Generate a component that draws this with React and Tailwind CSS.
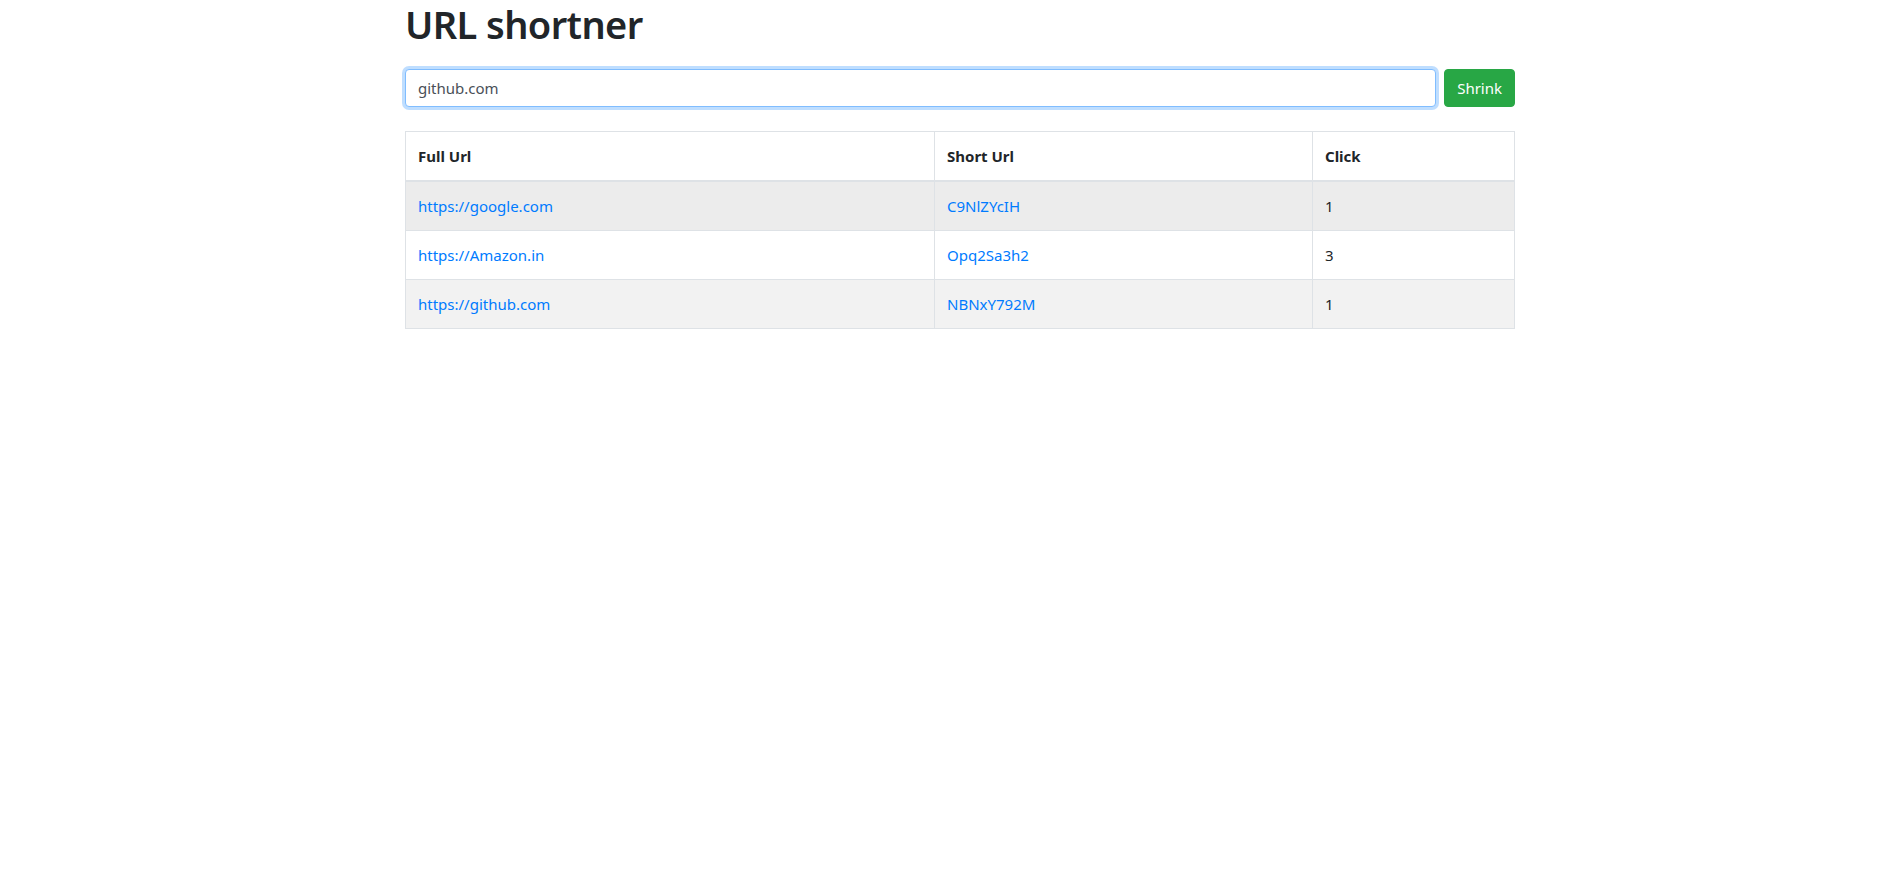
import { useState } from "react";

const links = [
  { full: "https://google.com", short: "C9NlZYcIH", clicks: 1, hover: true },
  { full: "https://Amazon.in", short: "Opq2Sa3h2", clicks: 3 },
  { full: "https://github.com", short: "NBNxY792M", clicks: 1 },
];

export default function App() {
  const [url, setUrl] = useState("github.com");

  return (
    <div className="min-h-screen bg-white text-[#212529] font-['Noto_Sans',sans-serif] text-[15px]">
      <div className="ml-[390px] w-[1140px] px-[15px]">
        <h1 className="text-[38px] leading-[48px] font-semibold mb-[21px] tracking-[-0.6px]">URL shortner</h1>

        <form className="flex gap-2 mb-6" onSubmit={(e) => e.preventDefault()}>
          <input
            value={url}
            onChange={(e) => setUrl(e.target.value)}
            className="flex-1 h-[38px] px-3 text-[15px] text-[#495057] bg-white border border-[#80bdff] rounded-[4px] outline-none shadow-[0_0_0_3px_rgba(0,123,255,0.25)]"
          />
          <button
            type="submit"
            className="h-[38px] px-3 bg-[#28a745] text-white text-[15px] rounded-[4px] border border-[#28a745]"
          >
            Shrink
          </button>
        </form>

        <table className="w-full border-collapse">
          <thead>
            <tr>
              <th className="w-[529px] border border-[#dee2e6] border-b-2 p-3 text-left font-bold leading-6">Full Url</th>
              <th className="w-[378px] border border-[#dee2e6] border-b-2 p-3 text-left font-bold leading-6">Short Url</th>
              <th className="border border-[#dee2e6] border-b-2 p-3 text-left font-bold leading-6">Click</th>
            </tr>
          </thead>
          <tbody>
            {links.map((link, i) => (
              <tr
                key={link.short}
                className={link.hover ? "bg-[#ececec]" : i % 2 === 0 ? "bg-[#f2f2f2]" : "bg-white"}
              >
                <td className="border border-[#dee2e6] p-3 leading-6">
                  <a href="#" className="text-[#007bff]">{link.full}</a>
                </td>
                <td className="border border-[#dee2e6] p-3 leading-6">
                  <a href="#" className="text-[#007bff]">{link.short}</a>
                </td>
                <td className="border border-[#dee2e6] p-3 leading-6">{link.clicks}</td>
              </tr>
            ))}
          </tbody>
        </table>
      </div>
    </div>
  );
}
